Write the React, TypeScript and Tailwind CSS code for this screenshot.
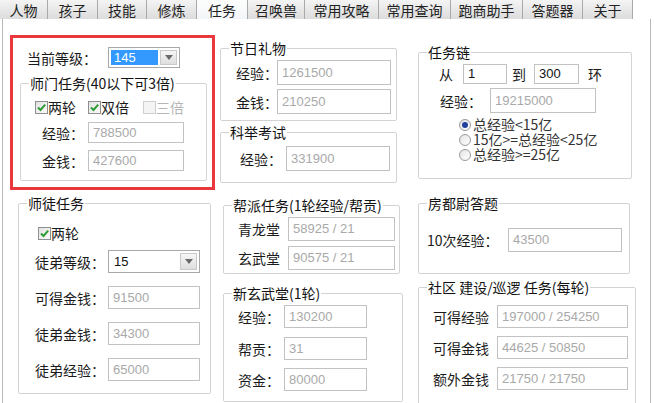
import type { ReactNode } from "react";

const tabs = [
  { name: "人物", w: "w-[48px]" },
  { name: "孩子", w: "w-[50px]" },
  { name: "技能", w: "w-[49px]" },
  { name: "修炼", w: "w-[50px]" },
  { name: "任务", w: "w-[51px]", active: true },
  { name: "召唤兽", w: "w-[57px]" },
  { name: "常用攻略", w: "w-[74px]" },
  { name: "常用查询", w: "w-[72px]" },
  { name: "跑商助手", w: "w-[72px]" },
  { name: "答题器", w: "w-[60px]" },
  { name: "关于", w: "w-[50px]" },
];

function TabBar() {
  return (
    <div className="flex h-[19px]">
      {tabs.map((t) => (
        <div
          key={t.name}
          className={`flex h-full items-center justify-center border-r border-[#a9a9a9] text-[14px] text-[#222] ${t.w} ${
            t.active
              ? "bg-linear-to-b from-[#fdfdfd] to-[#f2f5f8]"
              : "bg-linear-to-b from-[#f4f4f4] to-[#dcdcdc]"
          }`}
        >
          {t.name}
        </div>
      ))}
    </div>
  );
}

function GroupBox({
  title,
  className,
  children,
}: {
  title: string;
  className: string;
  children: ReactNode;
}) {
  return (
    <fieldset className={`shrink-0 rounded-[2px] border border-[#d3d3d3] ${className}`}>
      <legend className="ml-[8px] px-[1px] text-[14px] leading-4 text-[#111]">{title}</legend>
      {children}
    </fieldset>
  );
}

function TextBox({ value, className, dark }: { value: string; className: string; dark?: boolean }) {
  return (
    <div
      className={`flex shrink-0 items-center border border-[#c2c2c2] bg-white pl-[4px] font-['Liberation_Sans',sans-serif] text-[13px] ${
        dark ? "text-[#111]" : "text-[#a9a9a9]"
      } ${className}`}
    >
      {value}
    </div>
  );
}

function Field({
  label,
  value,
  rowCls,
  labelCls,
  boxCls,
}: {
  label: string;
  value: string;
  rowCls: string;
  labelCls: string;
  boxCls: string;
}) {
  return (
    <div className={`flex items-center ${rowCls}`}>
      <span className={`shrink-0 whitespace-nowrap ${labelCls}`}>{label}</span>
      <TextBox value={value} className={boxCls} />
    </div>
  );
}

function Arrow() {
  return (
    <svg viewBox="0 0 8 5" className="h-[5px] w-[8px]">
      <polygon points="0,0 8,0 4,5" fill="#6a6a6a" />
    </svg>
  );
}

function Combo({ value, className, selected }: { value: string; className: string; selected?: boolean }) {
  return (
    <div className={`flex shrink-0 items-stretch border border-[#a8a8a8] bg-white p-[2px] ${className}`}>
      <div
        className={`flex flex-1 items-center pl-[3px] font-['Liberation_Sans',sans-serif] text-[13px] ${
          selected ? "mr-[2px] bg-[#3399ff] text-white" : "text-[#111]"
        }`}
      >
        {value}
      </div>
      <div className="flex w-[17px] items-center justify-center border border-[#c9c9c9] bg-linear-to-b from-[#f6f6f6] to-[#dedede]">
        <Arrow />
      </div>
    </div>
  );
}

function Check({ label, checked, disabled, className = "" }: { label: string; checked?: boolean; disabled?: boolean; className?: string }) {
  return (
    <div className={`flex items-center ${className}`}>
      <span
        className={`flex h-[13px] w-[13px] items-center justify-center border ${
          disabled ? "border-[#cfcfcf] bg-[#f4f4f4]" : "border-[#8e8f8f] bg-linear-to-br from-[#e2e2e2] to-[#fcfcfc]"
        }`}
      >
        {checked && (
          <svg viewBox="0 0 11 11" className="h-[11px] w-[11px]">
            <path d="M2 5.5 L4.5 8 L9.2 2.6" stroke="#2e9b36" strokeWidth="2" fill="none" />
          </svg>
        )}
      </span>
      <span className={disabled ? "text-[#b5b5b5]" : ""}>{label}</span>
    </div>
  );
}

function Radio({ label, checked }: { label: string; checked?: boolean }) {
  return (
    <div className="flex h-[15px] items-center">
      <span className="flex h-[12px] w-[12px] shrink-0 items-center justify-center rounded-full border border-[#9a9a9a] bg-linear-to-br from-[#e4e4e4] to-white">
        {checked && <span className="h-[6px] w-[6px] rounded-full bg-[#23409e]" />}
      </span>
      <span className="ml-[2px] whitespace-nowrap text-[14px] leading-[15px] text-[#333]">{label}</span>
    </div>
  );
}

export default function App() {
  return (
    <div className="h-[403px] w-[654px] overflow-hidden bg-white font-['Noto_Sans_CJK_SC',sans-serif] text-[14px] leading-4 text-[#1a1a1a]">
      <TabBar />
      <div className="ml-[2px] flex h-[384px] w-[649px] items-start border-x border-[#b8b8b8]">
        {/* left column */}
        <div className="ml-[7px] flex w-[205px] shrink-0 flex-col">
          <div className="mt-[16px] flex h-[155px] flex-col border-[3px] border-[#e8383d]">
            <div className="mt-[9px] flex h-[21px] items-center pl-[14px]">
              <span className="w-[81px] shrink-0">当前等级：</span>
              <Combo value="145" selected className="h-[21px] w-[72px]" />
            </div>
            <GroupBox title="师门任务(40以下可3倍)" className="ml-[7px] mt-[7px] h-[106px] w-[187px]">
              <div className="mt-[8px] flex h-[16px] items-center pl-[14px]">
                <Check label="两轮" checked />
                <Check label="双倍" checked className="ml-[12px]" />
                <Check label="三倍" disabled className="ml-[14px]" />
              </div>
              <Field label="经验：" value="788500" rowCls="mt-[7px] pl-[21px]" labelCls="w-[46px]" boxCls="h-[21px] w-[96px]" />
              <Field label="金钱：" value="427600" rowCls="mt-[7px] pl-[21px]" labelCls="w-[46px]" boxCls="h-[21px] w-[96px]" />
            </GroupBox>
          </div>
          <GroupBox title="师徒任务" className="ml-[8px] mt-[5px] h-[199px] w-[193px]">
            <div className="mt-[14px] flex h-[16px] items-center pl-[19px]">
              <Check label="两轮" checked />
            </div>
            <div className="mt-[9px] flex items-center pl-[16px]">
              <span className="w-[73px] shrink-0">徒弟等级：</span>
              <Combo value="15" className="h-[23px] w-[92px]" />
            </div>
            <Field label="可得金钱：" value="91500" rowCls="mt-[13px] pl-[16px]" labelCls="w-[73px]" boxCls="h-[23px] w-[92px]" />
            <Field label="徒弟金钱：" value="34300" rowCls="mt-[13px] pl-[16px]" labelCls="w-[73px]" boxCls="h-[23px] w-[92px]" />
            <Field label="徒弟经验：" value="65000" rowCls="mt-[13px] pl-[16px]" labelCls="w-[73px]" boxCls="h-[23px] w-[92px]" />
          </GroupBox>
        </div>

        {/* middle column */}
        <div className="ml-[5px] flex w-[185px] shrink-0 flex-col">
          <GroupBox title="节日礼物" className="mt-[21px] h-[81px] w-[177px]">
            <Field label="经验：" value="1261500" rowCls="mt-[4px] pl-[15px]" labelCls="w-[41px]" boxCls="h-[25px] w-[114px]" />
            <Field label="金钱：" value="210250" rowCls="mt-[4px] pl-[15px]" labelCls="w-[41px]" boxCls="h-[25px] w-[114px]" />
          </GroupBox>
          <GroupBox title="科举考试" className="mt-[3px] h-[59px] w-[177px]">
            <Field label="经验：" value="331900" rowCls="mt-[6px] pl-[19px]" labelCls="w-[46px]" boxCls="h-[25px] w-[104px]" />
          </GroupBox>
          <GroupBox title="帮派任务(1轮经验/帮贡)" className="ml-[3px] mt-[14px] h-[77px] w-[177px]">
            <Field label="青龙堂" value="58925 / 21" rowCls="mt-[4px] pl-[14px]" labelCls="w-[50px]" boxCls="h-[24px] w-[107px]" />
            <Field label="玄武堂" value="90575 / 21" rowCls="mt-[5px] pl-[14px]" labelCls="w-[50px]" boxCls="h-[24px] w-[107px]" />
          </GroupBox>
          <GroupBox title="新玄武堂(1轮)" className="ml-[3px] mt-[11px] h-[117px] w-[180px]">
            <Field label="经验：" value="130200" rowCls="mt-[4px] pl-[14px]" labelCls="w-[46px]" boxCls="h-[23px] w-[83px]" />
            <Field label="帮贡：" value="31" rowCls="mt-[9px] pl-[14px]" labelCls="w-[46px]" boxCls="h-[23px] w-[83px]" />
            <Field label="资金：" value="80000" rowCls="mt-[8px] pl-[14px]" labelCls="w-[46px]" boxCls="h-[23px] w-[83px]" />
          </GroupBox>
        </div>

        {/* right column */}
        <div className="ml-[13px] flex w-[220px] shrink-0 flex-col">
          <GroupBox title="任务链" className="mt-[25px] h-[135px] w-[214px]">
            <div className="mt-[4px] flex h-[20px] items-center pl-[20px]">
              <span>从</span>
              <TextBox value="1" dark className="ml-[10px] h-[20px] w-[44px]" />
              <span className="ml-[5px]">到</span>
              <TextBox value="300" dark className="ml-[8px] h-[20px] w-[45px]" />
              <span className="ml-[9px]">环</span>
            </div>
            <Field label="经验：" value="19215000" rowCls="mt-[4px] pl-[21px]" labelCls="w-[50px]" boxCls="h-[25px] w-[106px]" />
            <div className="mt-[4px] flex flex-col pl-[40px]">
              <Radio label="总经验<15亿" checked />
              <Radio label="15亿>=总经验<25亿" />
              <Radio label="总经验>=25亿" />
            </div>
          </GroupBox>
          <GroupBox title="房都尉答题" className="mt-[16px] h-[79px] w-[212px]">
            <Field label="10次经验：" value="43500" rowCls="mt-[17px] pl-[8px]" labelCls="w-[81px]" boxCls="h-[24px] w-[114px]" />
          </GroupBox>
          <GroupBox title="社区 建设/巡逻 任务(每轮)" className="mt-[5px] h-[140px] w-[218px]">
            <Field label="可得经验" value="197000 / 254250" rowCls="mt-[10px] pl-[14px]" labelCls="w-[64px]" boxCls="h-[23px] w-[131px]" />
            <Field label="可得金钱" value="44625 / 50850" rowCls="mt-[8px] pl-[14px]" labelCls="w-[64px]" boxCls="h-[23px] w-[131px]" />
            <Field label="额外金钱" value="21750 / 21750" rowCls="mt-[8px] pl-[14px]" labelCls="w-[64px]" boxCls="h-[23px] w-[131px]" />
          </GroupBox>
        </div>
      </div>
    </div>
  );
}
